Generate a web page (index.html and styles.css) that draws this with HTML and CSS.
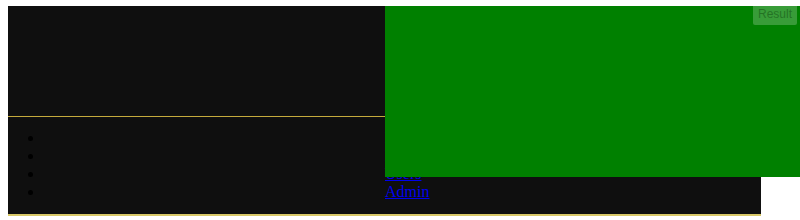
FILE: index.html
```html
<!DOCTYPE html>
<html>
<head>
<meta charset="utf-8">
<link rel="stylesheet" href="styles.css">
</head>
<body>
<div class="page">
  <div class="header"></div>
  <ul class="nav">
    <li><a href="#">Home</a></li>
    <li><a href="#">News</a></li>
    <li><a href="#">Users</a></li>
    <li><a href="#">Admin</a></li>
  </ul>
</div>
<div class="panel"></div>
<div class="label">Result</div>
</body>
</html>
```
FILE: styles.css
```css
html, body {
  margin: 0;
  padding: 0;
  background: #ffffff;
  font-family: "Liberation Serif", "Times New Roman", serif;
  font-size: 16px;
}
.page {
  margin: 6px 39px 0 8px;
  width: 753px;
  background: #0f0f0f;
  border-bottom: 2px solid #d8c868;
}
.header {
  height: 110px;
  border-bottom: 1px solid #c4aa3c;
}
.nav {
  margin: 0;
  padding: 12px 0 13px 40px;
  list-style: none;
}
.nav li {
  position: relative;
  line-height: 18px;
}
.nav li::before {
  content: "";
  position: absolute;
  left: -20px;
  top: 7px;
  width: 5px;
  height: 5px;
  border-radius: 50%;
  background: #000000;
}
.nav a {
  margin-left: 337px;
  color: #0000ee;
}
.panel {
  position: absolute;
  top: 6px;
  left: 385px;
  width: 415px;
  height: 171px;
  background: #008000;
}
.label {
  position: absolute;
  top: 4px;
  right: 3px;
  padding: 4px 5px;
  background: rgba(255, 255, 255, 0.22);
  color: rgba(20, 80, 20, 0.55);
  font-family: "Liberation Sans", Arial, sans-serif;
  font-size: 12px;
  line-height: 13px;
  border-radius: 2px;
}
```
